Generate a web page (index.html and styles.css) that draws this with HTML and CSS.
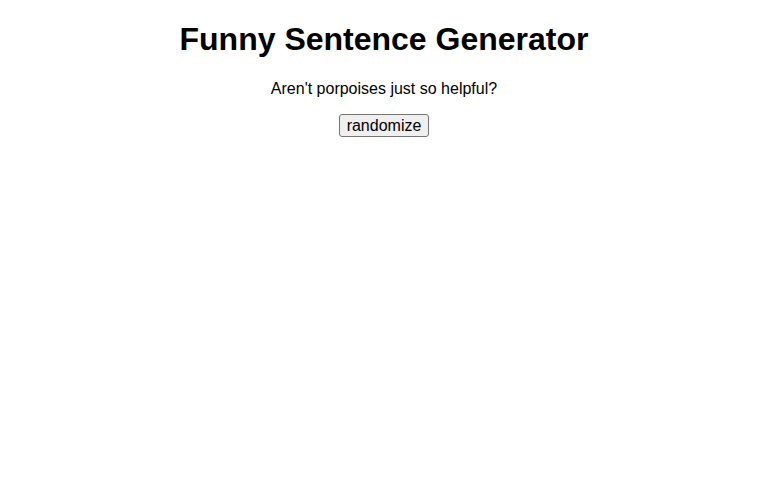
FILE: index.html
```html
<!DOCTYPE html>
<html lang="en">
<head>
  <meta charset="UTF-8">
  <title>Funny Sentence Generator</title>
  <link rel="stylesheet" href="styles.css">
</head>
<body>
  <div class="app">
    <h1>Funny Sentence Generator</h1>
    <p id="sentence">Aren't porpoises just so helpful?</p>
    <button class="btn" id="randomize">randomize</button>
  </div>
  <script>
    let subjects = ["porpoises", "llamas", "toasters", "grandmas", "penguins"];
    let traits = ["helpful", "sneaky", "polite", "dramatic", "fluffy"];
    let sentence = document.getElementById('sentence');

    function pick(list) {
      return list[Math.floor(Math.random() * list.length)];
    }

    document.getElementById('randomize').addEventListener('click', function() {
      sentence.textContent = "Aren't " + pick(subjects) + " just so " + pick(traits) + "?";
    });
  </script>
</body>
</html>
```

FILE: styles.css
```css
body { margin:0; background:#fff; color:#000; font-family:"Liberation Sans", Arial, sans-serif; }
.app { text-align:center; }
h1 { font-size:32px; font-weight:bold; margin:0.67em 0; }
p { font-size:16px; margin:1em 0; }
.btn { font-family:"Liberation Sans", Arial, sans-serif; font-size:16px; line-height:19px; color:#000; background:#efefef; border:1px solid #767676; border-radius:3px; padding:1px 7px; cursor:pointer; }
.btn:hover { background:#e5e5e5; }
```
